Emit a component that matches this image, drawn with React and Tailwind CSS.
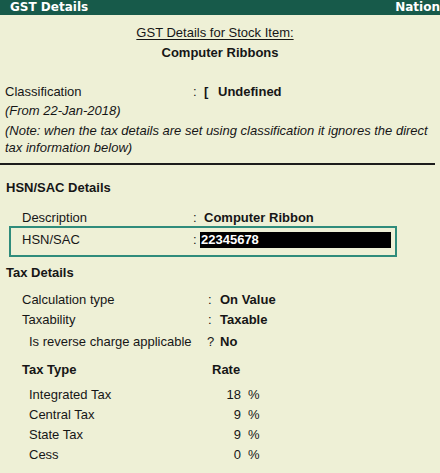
import React from "react";

const rates = [
  { name: "Integrated Tax", rate: "18" },
  { name: "Central Tax", rate: "9" },
  { name: "State Tax", rate: "9" },
  { name: "Cess", rate: "0" },
];

const App = () => {
  return (
    <div className="w-[440px] h-[473px] overflow-hidden bg-[#eef0d6] text-[13px] text-[#161616] font-[family-name:Liberation_Sans,Arial,sans-serif]">
      {/* title bar */}
      <div className="h-[15px] bg-[#175a4a] flex items-center justify-between pl-[10px] overflow-hidden text-white font-bold text-[12px] leading-[15px] font-[family-name:DejaVu_Sans,Verdana,sans-serif]">
        <span>GST Details</span>
        <span className="whitespace-nowrap">Nation</span>
      </div>

      <div className="flex flex-col items-center mt-[10px]">
        <div className="h-[16px] leading-[16px] underline underline-offset-2 mr-[10px]">GST Details for Stock Item:</div>
        <div className="h-[16px] leading-[16px] mt-[4px] font-bold">Computer Ribbons</div>
      </div>

      <div className="mt-[23px] pl-[5px] flex h-[16px] leading-[16px]">
        <span className="w-[188px]">Classification</span>
        <span className="w-[11px]">:</span>
        <span className="w-[14px] font-bold">[</span>
        <span className="font-bold">Undefined</span>
      </div>
      <div className="mt-[3px] pl-[5px] h-[16px] leading-[16px] italic">(From 22-Jan-2018)</div>

      <div className="mt-[3px] pl-[5px] leading-[17px] italic">
        (Note: when the tax details are set using classification it ignores the direct
        <br />
        tax information below)
      </div>

      <div className="mt-[7px] h-[2px] w-[435px] bg-[#1c1c1c]" />

      {/* HSN/SAC */}
      <div className="mt-[15px] pl-[6px] h-[16px] leading-[16px] font-bold">HSN/SAC Details</div>
      <div className="mt-[14px] pl-[22px] flex h-[16px] leading-[16px]">
        <span className="w-[171px]">Description</span>
        <span className="w-[11px]">:</span>
        <span className="font-bold">Computer Ribbon</span>
      </div>
      <div className="ml-[9px] w-[388px] border-2 border-[#2f8c7b] pl-[11px] pt-[4px] pb-[7px] flex h-[31px] leading-[16px]">
        <span className="w-[171px]">HSN/SAC</span>
        <span className="w-[7px]">:</span>
        <span className="w-[191px] h-[16px] bg-black text-white font-bold pl-[1px]">22345678</span>
      </div>

      {/* Tax */}
      <div className="mt-[8px] pl-[6px] h-[16px] leading-[16px] font-bold">Tax Details</div>
      <div className="mt-[11px] pl-[22px] flex h-[16px] leading-[16px]">
        <span className="w-[186px]">Calculation type</span>
        <span className="w-[12px]">:</span>
        <span className="font-bold">On Value</span>
      </div>
      <div className="mt-[4px] pl-[22px] flex h-[16px] leading-[16px]">
        <span className="w-[186px]">Taxability</span>
        <span className="w-[12px]">:</span>
        <span className="font-bold">Taxable</span>
      </div>
      <div className="mt-[6px] pl-[29px] flex h-[16px] leading-[16px]">
        <span className="w-[178px]">Is reverse charge applicable</span>
        <span className="w-[13px]">?</span>
        <span className="font-bold">No</span>
      </div>

      <div className="mt-[12px] pl-[22px] flex h-[16px] leading-[16px] font-bold">
        <span className="w-[190px]">Tax Type</span>
        <span>Rate</span>
      </div>
      <div className="mt-[9px] flex flex-col gap-[4px]">
        {rates.map((r) => (
          <div key={r.name} className="pl-[29px] flex h-[16px] leading-[16px]">
            <span className="w-[177px]">{r.name}</span>
            <span className="w-[35px] text-right">{r.rate}</span>
            <span className="ml-[7px]">%</span>
          </div>
        ))}
      </div>
    </div>
  );
};

export default App;
